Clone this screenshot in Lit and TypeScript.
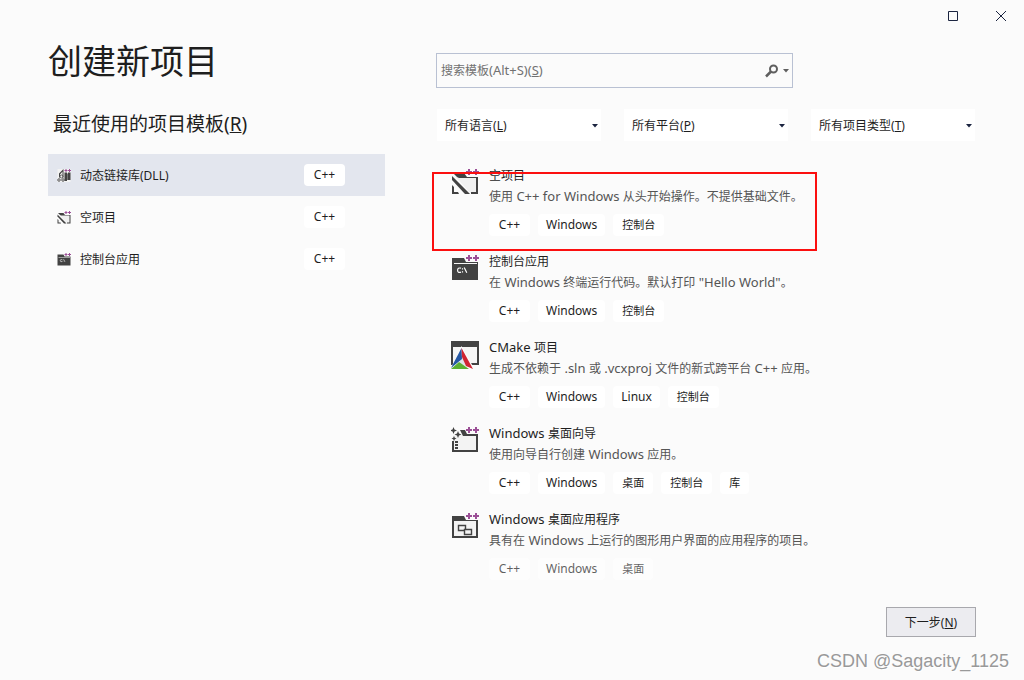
import { LitElement, html, svg, css } from "lit";
import { customElement, property, state } from "lit/decorators.js";
import { classMap } from "lit/directives/class-map.js";

type IconName = "dll" | "empty" | "console" | "cmake" | "wizard" | "desktop";

interface Template {
  icon: IconName;
  title: string;
  description: string;
  tags: string[];
}

const RECENT: { icon: IconName; title: string; tag: string }[] = [
  { icon: "dll", title: "动态链接库(DLL)", tag: "C++" },
  { icon: "empty", title: "空项目", tag: "C++" },
  { icon: "console", title: "控制台应用", tag: "C++" },
];

const FILTERS = [
  { id: "language", text: "所有语言", key: "L", options: ["C++", "C#"] },
  { id: "platform", text: "所有平台", key: "P", options: ["Windows", "Linux"] },
  { id: "type", text: "所有项目类型", key: "T", options: ["控制台", "桌面", "库"] },
];

const TEMPLATES: Template[] = [
  {
    icon: "empty",
    title: "空项目",
    description: "使用 C++ for Windows 从头开始操作。不提供基础文件。",
    tags: ["C++", "Windows", "控制台"],
  },
  {
    icon: "console",
    title: "控制台应用",
    description: '在 Windows 终端运行代码。默认打印 "Hello World"。',
    tags: ["C++", "Windows", "控制台"],
  },
  {
    icon: "cmake",
    title: "CMake 项目",
    description: "生成不依赖于 .sln 或 .vcxproj 文件的新式跨平台 C++ 应用。",
    tags: ["C++", "Windows", "Linux", "控制台"],
  },
  {
    icon: "wizard",
    title: "Windows 桌面向导",
    description: "使用向导自行创建 Windows 应用。",
    tags: ["C++", "Windows", "桌面", "控制台", "库"],
  },
  {
    icon: "desktop",
    title: "Windows 桌面应用程序",
    description: "具有在 Windows 上运行的图形用户界面的应用程序的项目。",
    tags: ["C++", "Windows", "桌面"],
  },
];

// Latin runs are set one size larger than the Chinese text around them.
const mixed = (text: string) =>
  text
    .split(/([\x20-\x7e]+)/)
    .filter(Boolean)
    .map((part) => (/^[\x20-\x7e]/.test(part) ? html`<span class="latin">${part}</span>` : part));

const plusPlus = svg`<path fill="#9b4f96" d="M17 4h2v2h2v2h-2v2h-2v-2h-2v-2h2zM24 4h2v2h2v2h-2v2h-2v-2h-2v-2h2z"/>`;
const folder = svg`
  <path fill="#f3f3f3" d="M2 11h24v17H2z"/>
  <path fill="#424242" fill-rule="evenodd" d="M1 7h12l2 4h12v18H1zM3 12v15h22V12z"/>`;

const ICONS = {
  empty: svg`
    <path fill="#f0f0f0" d="M5 12h21v16H19z"/>
    <path fill="#424242" d="M2 8h11l3 4h11v17h-7v-2h5V13H8L6 12zM1 20l2 2v5h4l1 2H1z"/>
    <path fill="#424242" d="M1 11l18 18h-5L1 15z"/>
    ${plusPlus}`,
  console: svg`
    <path fill="#424242" d="M1 7h12l2 4h12v18H1z"/>
    <path fill="#f6f6f6" d="M3 12h23v1H3z"/>
    <g fill="none" stroke="#fff" stroke-width="1.2">
      <path d="M10 17.2q-3.4-.9-3.4 2t3.4 2M13.2 16.500l2.600 5.200"/>
      <path d="M11.500 17.200v1.200M11.500 20.200v1.200"/>
    </g>
    ${plusPlus}`,
  cmake: svg`
    <path fill="#424242" d="M0 4h28v24H0z"/>
    <path fill="#f5f5f5" d="M2 10h24v16H2z"/>
    <path fill="#fbfbfb" d="M10.500 9L24 33H-1z"/>
    <path fill="#dfe3e8" d="M11 18l5 12-8-4z"/>
    <path fill="#2457a4" d="M10.500 11L0 31l11-9z"/>
    <path fill="#cf2432" d="M10.500 11L22 32l-7-3-4-9z"/>
    <path fill="#5bb031" d="M0 32l8-7 10 7z"/>`,
  wizard: svg`
    <path fill="#f3f3f3" d="M2 12h24v16H2z"/>
    <path fill="#424242" d="M9 7h5l2 4h11v18H1V18h2v9h22V13H12z"/>
    <path fill="#424242" d="M4 18h3v2H4zM4 21h3v2H4zM4 24h3v2H4z"/>
    <path fill="#424242" d="M2.500 4l1 2.500 2.500 1-2.500 1-1 2.500-1-2.500-2.500-1 2.500-1zM7 8l1 2.500 2.500 1-2.500 1L7 15l-1-2.500-2.500-1 2.500-1zM3 13l.8 1.700 1.700.8-1.700.8L3 18l-.8-1.700-1.700-.8 1.700-.8z"/>
    ${plusPlus}`,
  desktop: svg`
    ${folder}
    <g fill="#f3f3f3" stroke="#424242" stroke-width="1.400">
      <path d="M7.500 16.500h7v5h-7z"/>
      <path d="M13.500 20.500h7v5h-7z"/>
    </g>
    ${plusPlus}`,
  dll: svg`
    <path fill="#f3f3f3" d="M1 4h26v26H1z"/>
    <path fill="#424242" d="M9 8l4-4v17h-2V9l-5 6v6H4v-8zM15 11h5v17h-5zM22 11h5v15h-5z"/>
    <path fill="#777" d="M20 13h2v13h-2z"/>
    <g fill="none" stroke="#555" stroke-width="2">
      <circle cx="9" cy="19" r="3"/>
      <circle cx="4" cy="26" r="2.500"/>
      <circle cx="12" cy="26" r="2.500"/>
    </g>
    ${plusPlus}`,
};

@customElement("template-icon")
class TemplateIcon extends LitElement {
  @property() name: IconName = "empty";

  static styles = css`
    :host {
      display: block;
    }
    svg {
      display: block;
      width: 100%;
    }
  `;

  render() {
    return html`<svg viewBox="0 0 30 34" aria-hidden="true">${ICONS[this.name]}</svg>`;
  }
}

@customElement("tag-chip")
class TagChip extends LitElement {
  @property() text = "";

  static styles = css`
    :host {
      display: block;
    }
    .chip {
      display: block;
      box-sizing: border-box;
      min-width: 41px;
      padding: 0 8px;
      border-radius: 4px;
      background: #fff;
      font-size: 12px;
      line-height: 22px;
      text-align: center;
      white-space: nowrap;
    }
    .chinese {
      min-width: 0;
      padding: 0 9px;
      font-size: 11px;
    }
  `;

  render() {
    const chinese = !/^[\x20-\x7e]/.test(this.text);
    return html`<span class=${classMap({ chip: true, chinese })}>${this.text}</span>`;
  }
}

@customElement("app-root")
class AppRoot extends LitElement {
  @state() private selected = 0;
  @state() private query = "";
  @state() private chosen: Record<string, string> = {};

  static styles = css`
    :host {
      display: flex;
      flex-direction: column;
      position: relative;
      box-sizing: border-box;
      min-height: 100vh;
      background: #fbfbfb;
      color: #1e1e1e;
      font: 12px/21px "Noto Sans", "Noto Sans CJK SC", sans-serif;
    }
    button,
    input,
    select {
      font: inherit;
      color: inherit;
      margin: 0;
      border: 0;
      border-radius: 0;
      background: none;
    }
    ul {
      list-style: none;
      margin: 0;
      padding: 0;
    }
    .latin {
      font-size: 13px;
      white-space: pre-wrap;
    }
    .titlebar {
      display: flex;
      justify-content: flex-end;
      gap: 2px;
      height: 32px;
    }
    .window-button {
      display: grid;
      place-items: center;
      width: 46px;
      padding: 0;
    }
    .content {
      display: grid;
      grid-template-columns: minmax(0, 337fr) minmax(0, 540fr);
      column-gap: 51px;
      padding: 0 48px;
    }
    h1 {
      margin: 7px 0 27px;
      font-size: 34px;
      line-height: 44px;
      font-weight: 400;
    }
    h2 {
      margin: 0 0 16px;
      padding-left: 5px;
      font-size: 19px;
      line-height: 28px;
      font-weight: 400;
    }
    .recent-item {
      display: flex;
      align-items: center;
      gap: 8px;
      width: 100%;
      height: 42px;
      padding: 0 40px 0 9px;
      text-align: left;
    }
    .recent-item.active {
      background: #e3e6ee;
    }
    .small-icon {
      width: 15px;
    }
    .recent-title {
      flex: 1;
    }
    .picker {
      padding-top: 21px;
    }
    .search {
      display: grid;
      grid-template-columns: minmax(0, 1fr) auto;
      align-items: center;
      box-sizing: border-box;
      max-width: 357px;
      height: 35px;
      border: 1px solid #b9c1d3;
      color: #717171;
    }
    .search input {
      grid-area: 1 / 1;
      box-sizing: border-box;
      width: 100%;
      height: 33px;
      padding: 0 4px;
      outline: none;
    }
    .search label {
      grid-area: 1 / 1;
      padding-left: 4px;
      pointer-events: none;
    }
    .search button {
      display: flex;
      align-items: center;
      gap: 4px;
      padding: 0 3px;
    }
    .filters {
      display: grid;
      grid-template-columns: repeat(3, minmax(0, 1fr));
      gap: 23px;
      margin: 21px 0 24px;
      padding: 0 1px;
    }
    .filter {
      display: grid;
      grid-template-columns: minmax(0, 1fr) auto;
      align-items: center;
      height: 32px;
      background: #fff;
    }
    .filter select {
      grid-area: 1 / 1 / 2 / 3;
      appearance: none;
      width: 100%;
      height: 32px;
      padding: 0 8px;
    }
    .filter label {
      grid-area: 1 / 1;
      padding-left: 8px;
      pointer-events: none;
    }
    .filter svg {
      grid-area: 1 / 2;
      margin: 2px 3px 0 0;
      pointer-events: none;
    }
    .template {
      position: relative;
      display: grid;
      grid-template-columns: 30px minmax(0, 1fr);
      column-gap: 8px;
      height: 86px;
      padding-left: 15px;
    }
    .template-title,
    .template-text {
      margin: 0;
      font-size: 12px;
      line-height: 21px;
      font-weight: 400;
      white-space: nowrap;
    }
    .template-text {
      color: #555;
    }
    .tags {
      display: flex;
      gap: 8px;
      margin-top: 7px;
    }
    .template:last-child .tags {
      opacity: 0.7;
    }
    .highlight {
      position: absolute;
      top: 7px;
      left: -4px;
      box-sizing: border-box;
      width: 385px;
      height: 79px;
      border: 2px solid #fb0f0f;
      pointer-events: none;
    }
    .actions {
      display: flex;
      justify-content: flex-end;
      margin-top: auto;
      padding: 12px 48px 43px;
    }
    .next {
      width: 90px;
      height: 30px;
      padding: 0;
      border: 1px solid #a8a8ad;
      background: #ececf0;
    }
    .watermark {
      position: absolute;
      right: 15px;
      bottom: 7px;
      color: #999;
      font: 18px/24px "Liberation Sans", sans-serif;
      text-shadow: 1px 1px 0 #fff;
      pointer-events: none;
    }
  `;

  private choose(id: string, event: Event) {
    this.chosen = { ...this.chosen, [id]: (event.target as HTMLSelectElement).value };
  }

  private caret(color: string) {
    return html`<svg width="6" height="4" viewBox="0 0 6 4" aria-hidden="true">
      <path fill=${color} d="M0 0h6L3 3.500z" />
    </svg>`;
  }

  render() {
    return html`
      <header class="titlebar">
        <button class="window-button" aria-label="最大化">
          <svg width="12" height="12" viewBox="0 0 12 12">
            <path fill="none" stroke="#1b2440" d="M1.500 1.500h9v9h-9z" />
          </svg>
        </button>
        <button class="window-button" aria-label="关闭">
          <svg width="12" height="12" viewBox="0 0 12 12">
            <path fill="none" stroke="#1b2440" d="M1 1l10 10M11 1L1 11" />
          </svg>
        </button>
      </header>

      <main class="content">
        <section>
          <h1>创建新项目</h1>
          <h2>最近使用的项目模板(<u>R</u>)</h2>
          <ul>
            ${RECENT.map(
              (item, index) => html`<li>
                <button
                  class=${classMap({ "recent-item": true, active: index === this.selected })}
                  @click=${() => (this.selected = index)}
                >
                  <template-icon class="small-icon" name=${item.icon}></template-icon>
                  <span class="recent-title">${item.title}</span>
                  <tag-chip text=${item.tag}></tag-chip>
                </button>
              </li>`
            )}
          </ul>
        </section>

        <section class="picker">
          <div class="search">
            <input
              id="search"
              type="text"
              .value=${this.query}
              @input=${(e: Event) => (this.query = (e.target as HTMLInputElement).value)}
            />
            <label for="search" ?hidden=${this.query !== ""}
              >搜索模板<span class="latin">(Alt+S)(<u>S</u>)</span></label
            >
            <button aria-label="搜索">
              <svg width="14" height="14" viewBox="0 0 14 14" aria-hidden="true">
                <circle cx="8.500" cy="5" r="3.500" fill="none" stroke="#5f5f5f" stroke-width="2" />
                <path stroke="#5f5f5f" stroke-width="2.500" d="M6 7.500L1 12.500" />
              </svg>
              ${this.caret("#5f5f5f")}
            </button>
          </div>

          <div class="filters">
            ${FILTERS.map(
              (filter) => html`<div class="filter">
                <select id=${filter.id} @change=${(e: Event) => this.choose(filter.id, e)}>
                  <option value=""></option>
                  ${filter.options.map((option) => html`<option>${option}</option>`)}
                </select>
                <label for=${filter.id} ?hidden=${Boolean(this.chosen[filter.id])}
                  >${filter.text}(<u>${filter.key}</u>)</label
                >
                ${this.caret("#1b2440")}
              </div>`
            )}
          </div>

          <ul>
            ${TEMPLATES.map(
              (item, index) => html`<li class="template">
                <template-icon name=${item.icon}></template-icon>
                <div>
                  <h3 class="template-title">${mixed(item.title)}</h3>
                  <p class="template-text">${mixed(item.description)}</p>
                  <div class="tags">${item.tags.map((tag) => html`<tag-chip text=${tag}></tag-chip>`)}</div>
                </div>
                ${index === 0 ? html`<span class="highlight"></span>` : ""}
              </li>`
            )}
          </ul>
        </section>
      </main>

      <footer class="actions">
        <button class="next">下一步(<u>N</u>)</button>
      </footer>
      <div class="watermark">CSDN @Sagacity_1125</div>
    `;
  }
}
